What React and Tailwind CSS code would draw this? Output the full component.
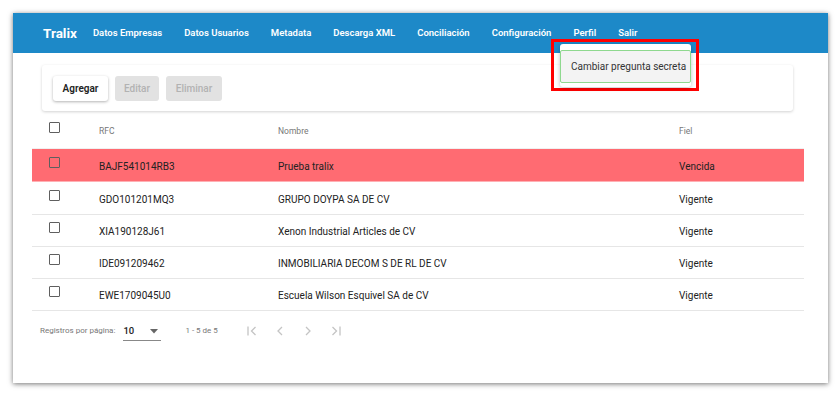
import React from "react";

const rows = [
  { rfc: "BAJF541014RB3", nombre: "Prueba tralix", fiel: "Vencida", red: true, h: "h-[33px]" },
  { rfc: "GDO101201MQ3", nombre: "GRUPO DOYPA SA DE CV", fiel: "Vigente", h: "h-[33px]" },
  { rfc: "XIA190128J61", nombre: "Xenon Industrial Articles de CV", fiel: "Vigente", h: "h-[32px]" },
  { rfc: "IDE091209462", nombre: "INMOBILIARIA DECOM S DE RL DE CV", fiel: "Vigente", h: "h-[32px]" },
  { rfc: "EWE1709045U0", nombre: "Escuela Wilson Esquivel SA de CV", fiel: "Vigente", h: "h-[32px]" },
];

const nav = ["Datos Empresas", "Datos Usuarios", "Metadata", "Descarga XML", "Conciliación", "Configuración", "Perfil", "Salir"];

function Box() {
  return <div className="w-[11px] h-[11px] border-[1.5px] border-[#5f5f5f] rounded-[1px]" />;
}

function Icon({ d }) {
  return (
    <svg width="14" height="14" viewBox="0 0 14 14" fill="none" stroke="#c4c4c4" strokeWidth="1.3">
      <path d={d} />
    </svg>
  );
}

export default function App() {
  return (
    <div className="w-[840px] h-[397px] bg-white pt-[13px] pl-[13px] overflow-hidden" style={{ fontFamily: "Roboto, 'Liberation Sans', sans-serif" }}>
      <div className="relative w-[815px] h-[370px] bg-white shadow-[0_1px_5px_rgba(0,0,0,0.55)] flex flex-col">
        <div className="h-[40px] bg-[#1d89c8] flex items-center pl-[30px] text-white shrink-0">
          <span className="text-[13.5px] font-bold mr-[16px]">Tralix</span>
          <div className="flex items-center gap-[22px] text-[9.5px] font-semibold pt-[1px] whitespace-nowrap">
            {nav.map((n) => (
              <span key={n}>{n}</span>
            ))}
          </div>
        </div>

        <div className="ml-[29px] mt-[12px] w-[751px] h-[46px] bg-white shadow-[0_1px_3px_rgba(0,0,0,0.18)] rounded-[3px] flex items-center pl-[11px] gap-[7px] shrink-0">
          <div className="h-[25px] w-[55px] bg-white rounded-[3px] shadow-[0_1px_3px_rgba(0,0,0,0.3)] flex items-center justify-center text-[10px] font-semibold text-[#222]">Agregar</div>
          <div className="h-[25px] w-[44px] bg-[#e2e2e2] rounded-[3px] flex items-center justify-center text-[10px] font-medium text-[#b2b2b2]">Editar</div>
          <div className="h-[25px] w-[56px] bg-[#e2e2e2] rounded-[3px] flex items-center justify-center text-[10px] font-medium text-[#b2b2b2]">Eliminar</div>
        </div>

        <div className="ml-[19px] w-[772px] flex flex-col">
          <div className="h-[38px] flex items-center text-[8.5px] text-[#777] border-b border-[#f0f0f0] pt-[3px]">
            <div className="w-[67px] pl-[17px] pb-[7px]"><Box /></div>
            <div className="w-[179px]">RFC</div>
            <div className="w-[401px]">Nombre</div>
            <div>Fiel</div>
          </div>
          {rows.map((r) => (
            <div key={r.rfc} className={`${r.h} flex items-center text-[10px] text-[#222] border-b pt-[2px] ${r.red ? "bg-[#ff6b72] border-[#ffb0b4]" : "border-[#e6e6e6]"}`}>
              <div className="w-[67px] pl-[17px] pb-[8px]"><Box /></div>
              <div className="w-[179px]">{r.rfc}</div>
              <div className="w-[401px]">{r.nombre}</div>
              <div>{r.fiel}</div>
            </div>
          ))}
        </div>

        <div className="h-[38px] flex items-center pl-[27px] text-[8px] text-[#777] pt-[2px]">
          <span>Registros por página:</span>
          <div className="ml-[8px] w-[38px] h-[18px] border-b border-[#888] flex items-center justify-between pr-[3px] mt-[2px]">
            <span className="text-[9.5px] text-[#222] font-medium">10</span>
            <svg width="8" height="5" viewBox="0 0 8 5"><path d="M0 0 L8 0 L4 4.5 Z" fill="#666" /></svg>
          </div>
          <span className="ml-[24px]">1 - 5 de 5</span>
          <div className="ml-[27px] flex items-center gap-[14px]">
            <Icon d="M3 2.5 V11.5 M10.5 3 L6.5 7 L10.5 11" />
            <Icon d="M9 3 L5 7 L9 11" />
            <Icon d="M5 3 L9 7 L5 11" />
            <Icon d="M3.5 3 L7.5 7 L3.5 11 M11 2.5 V11.5" />
          </div>
        </div>

        <div className="absolute left-[538px] top-[26px] w-[148px] h-[52px] border-[3px] border-[#ff0000]">
          <div className="absolute left-[6px] top-[2px] w-[131px] h-[43px] bg-white rounded-[3px] shadow-[0_1px_4px_rgba(0,0,0,0.25)]">
            <div className="mt-[6px] h-[33px] bg-[#f3f3f3] border-[1.5px] border-[#8ed88e] rounded-[2px] flex items-center pl-[10px] text-[10px] text-[#333] whitespace-nowrap">
              Cambiar pregunta secreta
            </div>
          </div>
        </div>
      </div>
    </div>
  );
}
